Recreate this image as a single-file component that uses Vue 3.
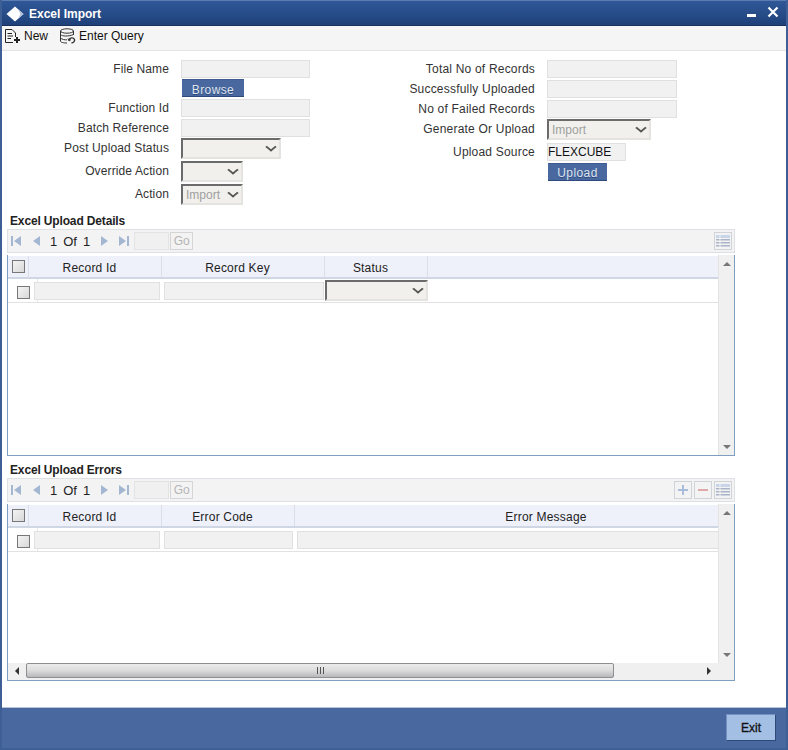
<template>
  <div class="window">
    <header class="titlebar">
      <svg class="logo" width="18" height="16" viewBox="0 0 18 16">
        <path d="M9 0.5 L17.5 8 L9 15.5 L0.5 8 Z" fill="#fff" />
        <path d="M12 3 L17.5 8 L12 13 L14.5 8 Z" fill="#aebfd8" />
      </svg>
      <span class="title">Excel Import</span>
      <span class="win-min"></span>
      <svg class="win-close" width="12" height="12" viewBox="0 0 12 12">
        <path d="M1.5 1.5 L10.5 10.5 M10.5 1.5 L1.5 10.5" stroke="#fff" stroke-width="2.2" />
      </svg>
    </header>

    <div class="toolbar">
      <span class="tool tool-new">
        <svg width="18" height="16" viewBox="0 0 18 16" fill="none" stroke="#222" stroke-width="1">
          <path d="M1.5 14.5 V1.5 H8 L11.5 5 V9 M1.5 14.5 H9" />
          <path d="M3.5 5.5 H8 M3.5 8 H9 M3.5 10.5 H7" />
          <path d="M13 9 V15 M10 12 H16" stroke-width="2" />
        </svg>
        New
      </span>
      <span class="tool tool-query">
        <svg width="18" height="16" viewBox="0 0 18 16" fill="none" stroke="#333" stroke-width="1">
          <ellipse cx="8" cy="3" rx="6.5" ry="2.2" />
          <path d="M1.5 3 V13 C1.5 14.5 5 15 8 15 M14.5 3 V7 M1.5 6.5 C3 8.5 10 8.5 14.5 6.5 M1.5 10 C3 11.5 6 12 8 11.8" />
          <path d="M10 12 C10.5 9.5 14.5 9 15.5 11.5 C15.8 13 14.5 14.5 12.5 15" stroke-width="1.4" />
          <path d="M9 10.5 L10 13 L12 11.5" />
        </svg>
        Enter Query
      </span>
    </div>

    <main class="content">
      <div class="form">
        <div class="form-col form-left">
          <div class="field">
            <label>File Name</label>
            <span class="input"></span>
          </div>
          <button class="action-btn browse">Browse</button>
          <div class="field gap-2">
            <label>Function Id</label>
            <span class="input"></span>
          </div>
          <div class="field gap-2">
            <label>Batch Reference</label>
            <span class="input"></span>
          </div>
          <div class="field gap-1 select-field">
            <label>Post Upload Status</label>
            <span class="select w-100"><i class="chev"></i></span>
          </div>
          <div class="field gap-2 select-field">
            <label>Override Action</label>
            <span class="select w-62"><i class="chev"></i></span>
          </div>
          <div class="field gap-2 select-field">
            <label>Action</label>
            <span class="select w-62 muted">Import<i class="chev"></i></span>
          </div>
        </div>

        <div class="form-col form-right">
          <div class="field">
            <label>Total No of Records</label>
            <span class="input w-130"></span>
          </div>
          <div class="field gap-2">
            <label>Successfully Uploaded</label>
            <span class="input w-130"></span>
          </div>
          <div class="field gap-2">
            <label>No of Failed Records</label>
            <span class="input w-130"></span>
          </div>
          <div class="field gap-1 select-field">
            <label>Generate Or Upload</label>
            <span class="select w-104 muted">Import<i class="chev"></i></span>
          </div>
          <div class="field gap-2 source-field">
            <label>Upload Source</label>
            <span class="input w-79 filled">FLEXCUBE</span>
          </div>
          <button class="action-btn upload">Upload</button>
        </div>
      </div>

      <section v-for="sec in sections" :key="sec.title" class="block" :class="sec.cls">
        <h3>{{ sec.title }}</h3>
        <div class="pager">
          <svg class="pg-icon first" width="10" height="10" viewBox="0 0 10 10"><path d="M0 0 H2 V10 H0 Z M10 0 V10 L3 5 Z" /></svg>
          <svg class="pg-icon prev" width="7" height="10" viewBox="0 0 7 10"><path d="M7 0 V10 L0 5 Z" /></svg>
          <span class="pg-text">1</span>
          <span class="pg-text of">Of</span>
          <span class="pg-text last-num">1</span>
          <svg class="pg-icon next" width="7" height="10" viewBox="0 0 7 10"><path d="M0 0 V10 L7 5 Z" /></svg>
          <svg class="pg-icon last" width="10" height="10" viewBox="0 0 10 10"><path d="M0 0 V10 L7 5 Z M8 0 H10 V10 H8 Z" /></svg>
          <span class="pg-input"></span>
          <span class="pg-go">Go</span>
          <span class="pg-spacer"></span>
          <span v-if="sec.editable" class="pg-btn">
            <svg width="12" height="12" viewBox="0 0 12 12"><path d="M5 1 H7 V5 H11 V7 H7 V11 H5 V7 H1 V5 H5 Z" fill="#a9bcdb" /></svg>
          </span>
          <span v-if="sec.editable" class="pg-btn">
            <svg width="12" height="12" viewBox="0 0 12 12"><rect x="1" y="5" width="10" height="2" fill="#e0a9a9" /></svg>
          </span>
          <span class="pg-btn">
            <svg width="14" height="12" viewBox="0 0 14 12">
              <path d="M0 0 H3.5 V3 H0 Z M4.5 0 H14 V3 H4.5 Z" fill="#c8d4e8" />
              <path d="M0 4 H3.5 V5.5 H0 Z M4.5 4 H14 V5.5 H4.5 Z M0 7 H3.5 V8.5 H0 Z M4.5 7 H14 V8.5 H4.5 Z M0 10 H3.5 V11.5 H0 Z M4.5 10 H14 V11.5 H4.5 Z" fill="#aab4c8" />
            </svg>
          </span>
        </div>

        <div class="grid-box">
          <div class="grid-main">
            <div class="grid-scroll">
              <div class="grid-head">
                <span class="cell-check"><i class="check"></i></span>
                <span
                  v-for="col in sec.columns"
                  :key="col.name"
                  class="head-cell"
                  :style="{ width: col.width + 'px' }"
                >{{ col.name }}</span>
                <span class="head-rest"></span>
              </div>
              <div class="grid-row">
                <span class="cell-check row-check"><i class="check"></i></span>
                <span
                  v-for="col in sec.columns"
                  :key="col.name"
                  class="row-cell"
                  :style="{ width: col.width + 'px' }"
                >
                  <span v-if="col.select" class="select cell-select"><i class="chev"></i></span>
                  <span v-else class="input cell-input"></span>
                </span>
              </div>
            </div>
            <div class="vscroll">
              <i class="arrow-up"></i>
              <i class="arrow-down"></i>
            </div>
          </div>
          <div v-if="sec.editable" class="hscroll">
            <span class="h-left"><i class="arrow-left"></i></span>
            <span class="h-thumb"><i class="grip"></i></span>
            <span class="h-track"><i class="arrow-right"></i></span>
          </div>
        </div>
      </section>
    </main>

    <footer class="footer">
      <button class="exit">Exit</button>
    </footer>
  </div>
</template>

<script setup>
const sections = [
  {
    title: 'Excel Upload Details',
    cls: 'details',
    editable: false,
    columns: [
      { name: 'Record Id', width: 133 },
      { name: 'Record Key', width: 163 },
      { name: 'Status', width: 103, select: true }
    ]
  },
  {
    title: 'Excel Upload Errors',
    cls: 'errors',
    editable: true,
    columns: [
      { name: 'Record Id', width: 133 },
      { name: 'Error Code', width: 133 },
      { name: 'Error Message', width: 514 }
    ]
  }
]
</script>

<style>
html,
body {
  margin: 0;
  background: #fff;
}
</style>

<style scoped>
.window {
  width: 788px;
  height: 750px;
  box-sizing: border-box;
  display: flex;
  flex-direction: column;
  border-left: 2px solid #3d5f96;
  border-right: 2px solid #3d5f96;
  font-family: "Liberation Sans", Arial, sans-serif;
  font-size: 12px;
  color: #333;
  background: #fff;
  overflow: hidden;
}

.titlebar {
  height: 26px;
  flex: none;
  margin: 0 -2px;
  box-sizing: border-box;
  display: flex;
  align-items: center;
  padding: 1px 9px 0 6px;
  border-top: 1px solid #5a7cb0;
  border-bottom: 1px solid #17305e;
  background: linear-gradient(#2f5797, #274c88 55%, #1f4079);
}

.title {
  margin-left: 5px;
  color: #fff;
  font-size: 12px;
  font-weight: bold;
}

.win-min {
  margin-left: auto;
  width: 9px;
  height: 3px;
  margin-top: 3px;
  background: #fff;
}

.win-close {
  margin: -3px 0 0 11px;
}

.toolbar {
  height: 25px;
  flex: none;
  box-sizing: border-box;
  display: flex;
  align-items: center;
  padding-bottom: 4px;
  border-bottom: 1px solid #e3e3e3;
  background: #f5f5f5;
  color: #111;
}

.tool {
  display: inline-flex;
  align-items: center;
  gap: 2px;
}

.tool-new {
  margin-left: 2px;
}

.tool-query {
  margin-left: 11px;
}

.content {
  flex: 1;
  min-height: 0;
}

.form {
  display: flex;
  height: 155px;
  padding-top: 9px;
  box-sizing: border-box;
}

.form-col {
  display: flex;
  flex-direction: column;
  align-items: flex-start;
}

.form-left {
  width: 376px;
}

.field {
  display: flex;
  align-items: center;
  height: 18px;
}

.select-field {
  height: 21px;
}

.field label {
  width: 167px;
  margin-right: 12px;
  text-align: right;
  white-space: nowrap;
  letter-spacing: 0.12px;
}

.form-right .field label {
  width: 157px;
  letter-spacing: 0.2px;
}

.select-field label {
  margin-top: -2px;
}

.source-field {
  padding-top: 1px;
}

.gap-1 {
  margin-top: 1px;
}

.gap-2 {
  margin-top: 2px;
}

.input {
  display: inline-block;
  box-sizing: border-box;
  width: 129px;
  height: 18px;
  line-height: 16px;
  border: 1px solid #e0e0e0;
  background: #f1f1f1;
}

.w-130 {
  width: 130px;
}

.w-79 {
  width: 79px;
}

.filled {
  color: #111;
}

.select {
  display: inline-flex;
  align-items: center;
  position: relative;
  box-sizing: border-box;
  height: 21px;
  padding-left: 3px;
  border-style: solid;
  border-width: 2px;
  border-color: #6b6b6b #e4e3df #e4e3df #6b6b6b;
  background: #f1f0ec;
}

.w-100 {
  width: 100px;
}

.w-62 {
  width: 62px;
}

.w-104 {
  width: 104px;
}

.muted {
  color: #a0a0a0;
}

.chev {
  position: absolute;
  right: 4px;
  top: 3px;
  width: 8px;
  height: 8px;
  box-sizing: border-box;
  border-right: 2px solid #555;
  border-bottom: 2px solid #555;
  transform: scaleY(0.8) rotate(45deg);
}

.action-btn {
  display: block;
  box-sizing: border-box;
  height: 18px;
  padding: 1px 0 0;
  border: 0;
  border-bottom: 1px solid #2c4a7c;
  border-top: 1px solid #3e5c92;
  background: #4a68a0;
  color: #dfe5ef;
  font: 12px "Liberation Sans", Arial, sans-serif;
  letter-spacing: 0.4px;
  text-shadow: 0 1px 0 #2c4a7c;
}

.browse {
  width: 62px;
  margin: 1px 0 0 180px;
  padding-top: 3px;
}

.upload {
  width: 59px;
  margin: 2px 0 0 170px;
}

.block {
  margin-left: 5px;
  width: 728px;
}

.details {
  height: 249px;
  padding-top: 8px;
}

h3 {
  margin: 0;
  height: 15px;
  padding-left: 3px;
  font-size: 12px;
  line-height: 14px;
  letter-spacing: -0.15px;
  color: #222;
}

.pager {
  display: flex;
  align-items: center;
  height: 24px;
  box-sizing: border-box;
  border: 1px solid #dde1e6;
  background: #f3f3f3;
}

.pg-icon {
  fill: #a4b7d2;
  flex: none;
}

.first {
  margin-left: 3px;
}

.prev {
  margin-left: 12px;
}

.pg-text {
  font-size: 13px;
  color: #222;
  margin-left: 10px;
}

.of {
  margin-left: 6px;
}

.last-num {
  margin-left: 6px;
}

.next {
  margin-left: 11px;
}

.last {
  margin-left: 11px;
}

.pg-input {
  box-sizing: border-box;
  width: 35px;
  height: 18px;
  margin-left: 5px;
  border: 1px solid #e3e3e3;
  background: #f0f0f0;
}

.pg-go {
  box-sizing: border-box;
  width: 23px;
  height: 18px;
  margin-left: 1px;
  border: 1px solid #d5d5d5;
  color: #b5b5b5;
  text-align: center;
  line-height: 17px;
}

.pg-spacer {
  flex: 1;
}

.pg-btn {
  display: inline-flex;
  align-items: center;
  justify-content: center;
  box-sizing: border-box;
  width: 18px;
  height: 18px;
  margin-left: 2px;
  border: 1px solid #d0d3d8;
  background: #f3f3f3;
}

.pg-btn:last-child {
  margin-right: 2px;
}

.grid-box {
  margin-top: 2px;
  box-sizing: border-box;
  border: 1px solid #7f9fc0;
  border-top: 0;
}

.details .grid-main {
  height: 200px;
}

.errors .grid-main {
  height: 159px;
}

.grid-main {
  display: flex;
}

.grid-scroll {
  width: 710px;
  flex: none;
  overflow: hidden;
  padding-top: 1px;
}

.grid-head {
  display: flex;
  height: 23px;
  box-sizing: border-box;
  border-bottom: 2px solid #cfd6e4;
  background: #eef1fa;
  color: #222;
}

.cell-check {
  display: flex;
  align-items: center;
  justify-content: center;
  flex: none;
  box-sizing: border-box;
  width: 21px;
  border-right: 1px solid #d8deea;
}

.check {
  display: block;
  flex: none;
  box-sizing: border-box;
  width: 13px;
  height: 13px;
  border: 1px solid #777;
  background: linear-gradient(135deg, #f4f4f4, #d8d8d8);
}

.head-cell {
  flex: none;
  box-sizing: border-box;
  padding-right: 11px;
  text-align: center;
  line-height: 24px;
  letter-spacing: 0.2px;
  white-space: nowrap;
  border-right: 1px solid #d8deea;
}

.head-rest {
  flex: 1;
}

.grid-row {
  display: flex;
  height: 24px;
  box-sizing: border-box;
  border-bottom: 1px solid #e2e2e2;
}

.row-check {
  width: 30px;
  margin-right: -9px;
  justify-content: flex-start;
  padding: 3px 0 0 9px;
  border-right: 1px solid #e6e6e6;
}

.row-cell {
  flex: none;
  box-sizing: border-box;
  display: flex;
  align-items: center;
  padding-left: 5px;
  position: relative;
}

.row-cell:nth-child(3) {
  padding-left: 2px;
}

.cell-input {
  width: calc(100% - 6px);
}

.row-cell:nth-child(2) .cell-input {
  width: 126px;
}

.row-cell:nth-child(3) .cell-input {
  width: 160px;
}

.errors .row-cell:nth-child(3) .cell-input {
  width: 129px;
}

.errors .row-cell:nth-child(4) {
  padding-left: 2px;
}

.errors .row-cell:nth-child(4) .cell-input {
  width: 505px;
}

.cell-select {
  width: 103px;
  margin-left: -5px;
}

.vscroll {
  flex: 1;
  position: relative;
  background: #f0f0f0;
  border-left: 1px solid #e4e4e4;
}

.arrow-up,
.arrow-down {
  position: absolute;
  left: 4px;
  width: 0;
  height: 0;
  border-left: 4px solid transparent;
  border-right: 4px solid transparent;
}

.arrow-up {
  top: 7px;
  border-bottom: 4px solid #777;
}

.arrow-down {
  bottom: 6px;
  border-top: 4px solid #777;
}

.hscroll {
  display: flex;
  height: 17px;
  background: #f0f0f0;
}

.h-left {
  position: relative;
  width: 18px;
  flex: none;
}

.arrow-left,
.arrow-right {
  position: absolute;
  top: 4px;
  width: 0;
  height: 0;
  border-top: 4px solid transparent;
  border-bottom: 4px solid transparent;
}

.arrow-left {
  left: 7px;
  border-right: 4px solid #333;
}

.h-thumb {
  display: flex;
  align-items: center;
  justify-content: center;
  flex: none;
  box-sizing: border-box;
  width: 588px;
  height: 15px;
  border: 1px solid #8f8f8f;
  border-radius: 2px;
  background: linear-gradient(#ececec, #dcdcdc 50%, #b8b8bc);
}

.grip {
  width: 7px;
  height: 7px;
  background: repeating-linear-gradient(90deg, #555 0 1px, transparent 1px 3px);
}

.h-track {
  flex: 1;
  position: relative;
}

.arrow-right {
  left: 93px;
  border-left: 4px solid #333;
}

.footer {
  flex: none;
  height: 43px;
  margin: auto -2px 0;
  box-sizing: border-box;
  display: flex;
  align-items: flex-start;
  justify-content: flex-end;
  padding: 6px 12px 0 0;
  border-top: 1px solid #b7c4da;
  border-bottom: 2px solid #3d5f96;
  background: #4a68a0;
}

.exit {
  width: 50px;
  height: 27px;
  box-sizing: border-box;
  border: 1px solid #7392c2;
  border-right-color: #2e4a7a;
  border-bottom-color: #2e4a7a;
  background: #a3bfe3;
  color: #111;
  font: 12px "Liberation Sans", Arial, sans-serif;
  -webkit-text-stroke: 0.3px #111;
}
</style>
